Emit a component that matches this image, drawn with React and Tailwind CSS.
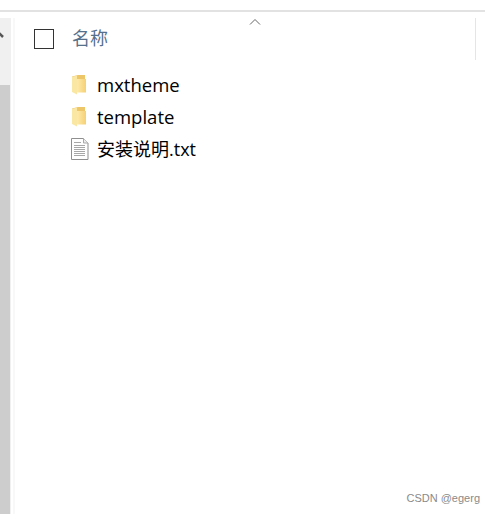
import React from 'react';

const FolderIcon = () => (
  <svg width="16" height="22" viewBox="0 0 16 22" className="shrink-0">
    <defs>
      <linearGradient id="folderBody" x1="0" y1="0" x2="1" y2="0">
        <stop offset="0" stopColor="#fdeaa8" />
        <stop offset="1" stopColor="#f6d076" />
      </linearGradient>
    </defs>
    <path d="M1 2.500L7 1h7v17H7z" fill="#eec66a" />
    <path d="M1 3l5-1.500v19L1 18z" fill="#fbe7a4" />
    <path d="M6 5h9v13.500H6z" fill="url(#folderBody)" />
  </svg>
);

const TextFileIcon = () => (
  <svg width="20" height="24" viewBox="0 0 20 24" className="shrink-0">
    <path d="M1.500 1.500h12l4.500 4.500v16.500H1.500z" fill="#fff" stroke="#8f8f8f" />
    <path d="M13.500 1.500v4.500h4.500" fill="#eee" stroke="#a8a8a8" />
    <path d="M4 5.500h7M4 8.500h11M4 10.500h11M4 12.500h11M4 14.500h11M4 16.500h11M4 18.500h11" stroke="#a8a8a8" />
  </svg>
);

const files = [
  { name: 'mxtheme', icon: FolderIcon, row: 'pl-[56px] gap-[10px]', text: 'text-[18.5px]' },
  { name: 'template', icon: FolderIcon, row: 'pl-[56px] gap-[10px]', text: 'text-[18.5px]' },
  { name: '安装说明.txt', icon: TextFileIcon, row: 'pl-[55px] gap-[7px]', text: 'text-[18px]' },
];

export default function App() {
  return (
    <div className="relative w-[485px] h-[514px] bg-white overflow-hidden font-['Open_Sans','Noto_Sans_CJK_SC',sans-serif]">
      {/* top line */}
      <div className="h-[10px]" />
      <div className="h-[2px] bg-[#e2e2e2]" />

      <div className="flex h-[502px]">
        {/* scrollbar */}
        <div className="flex pt-[6px]">
          <div className="w-[11px] flex flex-col bg-[#f0f0f0]">
            <div className="h-[67px] pt-[12px]">
              <svg width="10" height="10" viewBox="0 0 10 10">
                <path d="M-1 3L3 7" fill="none" stroke="#555" strokeWidth="2.500" />
              </svg>
            </div>
            <div className="flex-1 bg-[#cdcdcd] mr-[1px]" />
          </div>
          <div className="w-[2px]" />
          <div className="w-[2px] bg-[#f8f8f8]" />
        </div>

        {/* file list */}
        <div className="flex-1 relative">
          <div className="flex items-center h-[53px]">
            <div className="ml-[19px] w-[20px] h-[20px] border border-[#333] box-border" />
            <span className="ml-[18px] text-[18px] text-[#56708c]">名称</span>
          </div>
          <svg width="12" height="7" viewBox="0 0 12 7" className="absolute left-[234px] top-[6px]">
            <path d="M1 6.500L6 1.500L11 6.500" fill="none" stroke="#666" />
          </svg>
          <div className="absolute left-[460px] top-[6px] w-[1px] h-[42px] bg-[#e5e5e5]" />

          <div className="flex flex-col pt-[4px]">
            {files.map((file) => {
              const Icon = file.icon;
              return (
                <div key={file.name} className={`flex items-center h-[32px] ${file.row}`}>
                  <Icon />
                  <span className={`${file.text} text-black`}>{file.name}</span>
                </div>
              );
            })}
          </div>
        </div>
      </div>

      <div className="absolute right-[5px] bottom-[8px] text-[11px] text-[#8a8a8a] font-['Liberation_Sans',sans-serif]">CSDN @egerg</div>
    </div>
  );
}
